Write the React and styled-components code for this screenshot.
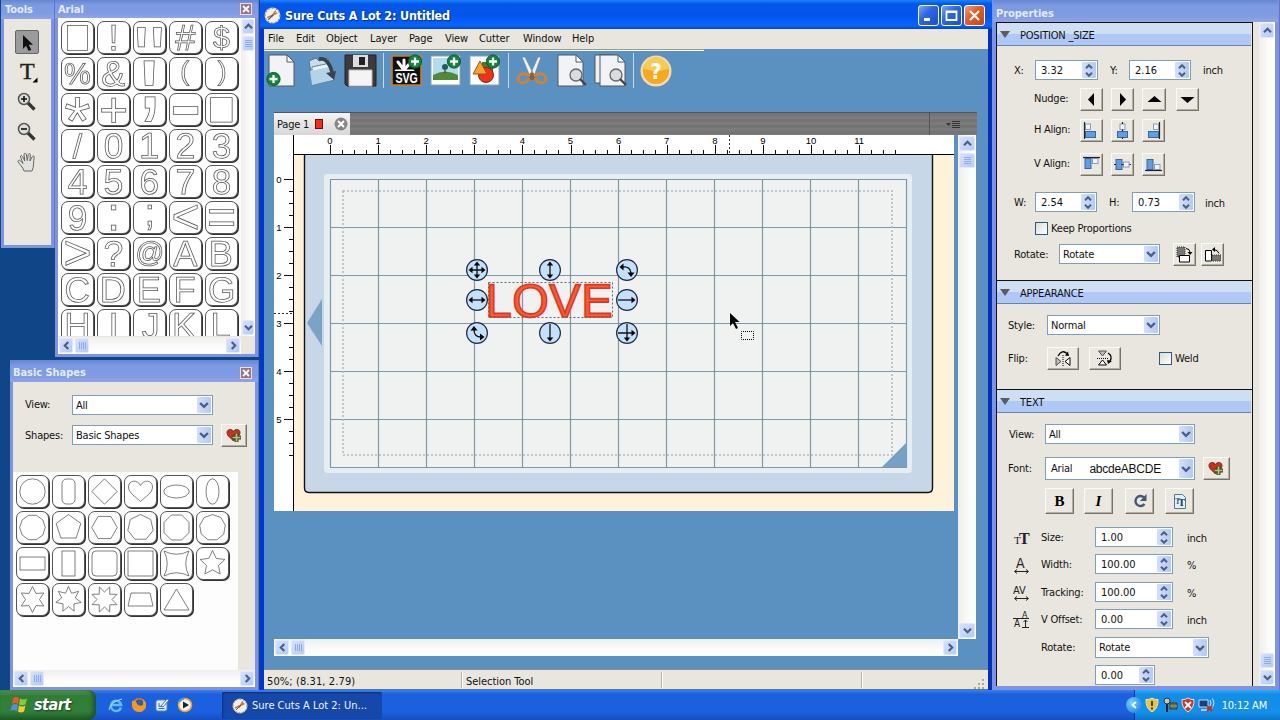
import React, { useMemo } from 'react';
import styled, { createGlobalStyle, css } from 'styled-components';

const colors = {
  desktop: '#104687',
  face: '#e9e6df',
  sky: '#5a91c1',
  border: '#7f9db9',
  chevron: '#4a5f8b',
};

const ui = `'DejaVu Sans Condensed', 'DejaVu Sans', sans-serif`;

const GlobalStyle = createGlobalStyle`
  body {
    margin: 0;
    overflow: hidden;
  }

  * {
    box-sizing: border-box;
  }

  svg {
    display: block;
    flex: none;
  }
`;

const Desktop = styled.div`
  position: relative;
  width: 1280px;
  height: 720px;
  overflow: hidden;
  background: ${colors.desktop};
  font-family: ${ui};
  font-stretch: condensed;
  font-size: 11px;
  letter-spacing: -0.2px;
  color: #111;
  white-space: nowrap;
  cursor: default;
`;

const Frame = styled.section`
  position: absolute;
  left: ${p => p.$x}px;
  top: ${p => p.$y}px;
  width: ${p => p.$w}px;
  height: ${p => p.$h}px;
  display: flex;
  flex-direction: column;
`;

const Palette = styled(Frame)`
  padding: ${p => p.$pad || '0 3px 3px'};
  background: #7e94de;
  border-right: 1px solid #6276c4;
`;

const PaletteTitle = styled.header`
  flex: none;
  display: flex;
  align-items: center;
  justify-content: space-between;
  height: ${p => p.$h}px;
  margin: 0 -3px;
  padding: ${p => p.$pad || '0 4px'};
  background: linear-gradient(#6585d2, #7c9ae2 25%, #809be2 70%, #90a5e4);
  font-weight: bold;
  letter-spacing: -0.05px;
  color: #e2eafc;
`;

const PaletteClose = styled.button`
  display: flex;
  align-items: center;
  justify-content: center;
  width: 12px;
  height: 12px;
  padding: 0;
  border: 1px solid #e9dfe4;
  background: #a0707c;
`;

const Body = styled.div`
  flex: 1;
  min-height: 0;
  display: flex;
  flex-direction: column;
  background: ${colors.face};
`;

const Row = styled.div`
  flex: none;
  display: flex;
  align-items: center;
  height: ${p => p.$h}px;
  margin-top: ${p => p.$mt || 0}px;
  padding-left: ${p => p.$pl || 0}px;
`;

const Label = styled.span`
  flex: none;
  width: ${p => p.$w}px;
  padding: ${p => p.$drop || 0}px 0 ${p => (p.$up ? 2 : 0)}px;
  letter-spacing: ${p => p.$ls || -0.2}px;
`;

const Raised = styled.button`
  flex: none;
  display: flex;
  align-items: center;
  justify-content: center;
  width: ${p => p.$w || 23}px;
  height: ${p => p.$h || 23}px;
  margin: 0 ${p => p.$mr || 0}px 0 0;
  padding: 0;
  border: 1px solid;
  border-color: #fbfaf7 #77736b #77736b #fbfaf7;
  box-shadow: inset -1px -1px 0 #b5b0a6;
  background: #ebe8e1;
  color: #000;
  font: ${p => (p.$italic ? 'italic' : 'normal')} bold 15px 'Liberation Serif', serif;
`;

const Field = styled.div`
  flex: none;
  display: flex;
  align-items: center;
  justify-content: space-between;
  width: ${p => p.$w}px;
  height: ${p => p.$h || 20}px;
  padding: 1px 1px 1px ${p => p.$pl || 3}px;
  margin-right: ${p => p.$mr || 0}px;
  border: 1px solid ${colors.border};
  background: #fff;
`;

const FieldButton = styled.span`
  display: flex;
  flex-direction: column;
  align-items: center;
  justify-content: center;
  gap: 3px;
  width: 14px;
  height: 100%;
  border-radius: 1px;
  background: linear-gradient(90deg, #d3e0fc, #b4c8f4);
`;

const Check = styled.span`
  flex: none;
  width: 13px;
  height: 13px;
  margin-right: 3px;
  border: 1px solid #2f5a80;
  background: linear-gradient(135deg, #dcdcd7, #fff);
`;

const Track = styled.div`
  flex: none;
  display: flex;
  flex-direction: ${p => (p.$vertical ? 'column' : 'row')};
  gap: 2px;
  padding: 1px;
  width: ${p => (p.$vertical ? `${p.$size || 16}px` : 'auto')};
  height: ${p => (p.$vertical ? 'auto' : `${p.$size || 16}px`)};
  background: ${p =>
    p.$vertical
      ? 'linear-gradient(90deg, #efeee9, #fbfbfa 60%, #fff)'
      : 'linear-gradient(#f0efeb, #fbfbfa 60%, #fff)'};
`;

const TrackPart = styled.span`
  flex: none;
  display: flex;
  align-items: center;
  justify-content: center;
  width: ${p => (p.$vertical ? 'auto' : '14px')};
  height: ${p => (p.$vertical ? '15px' : 'auto')};
  ${p => p.$end && (p.$vertical ? 'margin-top: auto;' : 'margin-left: auto;')}
  border: 1px solid #dfe8fd;
  border-radius: 2px;
  background: linear-gradient(135deg, #d5e1fd, #b7caf6);
`;

const Chevron = ({ dir = 'down', size = 9 }) => {
  const turn = { down: 0, up: 180, left: 90, right: -90 }[dir];
  return (
    <svg width={size} height={size} viewBox="0 0 9 9">
      <path
        d="M1 2.7 4.5 6.2 8 2.7"
        transform={`rotate(${turn} 4.5 4.5)`}
        fill="none"
        stroke={colors.chevron}
        strokeWidth="2.2"
      />
    </svg>
  );
};

const MiniChevron = ({ up }) => (
  <svg width="8" height="5" viewBox="0 0 8 5">
    <path d={up ? 'M1 4.2 4 1.2 7 4.2' : 'M1 .8 4 3.8 7 .8'} fill="none" stroke={colors.chevron} strokeWidth="2" />
  </svg>
);

const Grip = ({ vertical }) => (
  <svg width="9" height="9" viewBox="0 0 9 9">
    <path
      d={vertical ? 'M1 1.5H8M1 3.5H8M1 5.5H8M1 7.5H8' : 'M1.5 1V8M3.5 1V8M5.5 1V8M7.5 1V8'}
      stroke="#8fabea"
      strokeWidth="1"
    />
  </svg>
);

const Scrollbar = ({ vertical, size, thumb = 'start' }) => (
  <Track $vertical={vertical} $size={size}>
    <TrackPart $vertical={vertical}>
      <Chevron dir={vertical ? 'up' : 'left'} />
    </TrackPart>
    <TrackPart $vertical={vertical} $end={thumb === 'end'}>
      <Grip vertical={vertical} />
    </TrackPart>
    <TrackPart $vertical={vertical} $end={thumb !== 'end'}>
      <Chevron dir={vertical ? 'down' : 'right'} />
    </TrackPart>
  </Track>
);

const Select = ({ children, w, h, mr }) => (
  <Field $w={w} $h={h} $mr={mr}>
    <span>{children}</span>
    <FieldButton>
      <Chevron size={10} />
    </FieldButton>
  </Field>
);

const Spinner = ({ value, w, mr }) => (
  <Field $w={w} $mr={mr} $pl={5}>
    <Label $ls={0.01}>{value}</Label>
    <FieldButton>
      <MiniChevron up />
      <MiniChevron />
    </FieldButton>
  </Field>
);

/* ---------- tiles ---------- */

const Tiles = styled.div`
  flex: 1;
  min-width: 0;
  display: grid;
  grid-template-columns: repeat(${p => p.$cols}, 36px);
  grid-auto-rows: 36px;
  align-content: start;
  padding: 3px 0 0 3px;
  overflow: hidden;
  background: #fdfdfd;
`;

const Tile = styled.div`
  width: 33px;
  height: 33px;
  border: 1px solid #555;
  border-radius: 7px;
  box-shadow: 1px 1px 0 #333;
  background: #fff;
`;

const Outline = styled.svg.attrs({ width: 31, height: 31, viewBox: '0 0 31 31' })`
  overflow: visible;
  fill: none;
  stroke: #555;
  stroke-width: 0.75;
  letter-spacing: 0;
  font-stretch: normal;
  text-rendering: geometricPrecision;
  will-change: transform;
`;

const GLYPH_FONT = `'Liberation Sans', Arial, sans-serif`;

// scale each glyph so that its ink fills the tile
const fitGlyph = char => {
  const ctx = document.createElement('canvas').getContext('2d');
  ctx.font = `100px ${GLYPH_FONT}`;
  const m = ctx.measureText(char);
  const w = m.actualBoundingBoxLeft + m.actualBoundingBoxRight;
  const h = m.actualBoundingBoxAscent + m.actualBoundingBoxDescent;
  const k = 25 / Math.max(w, h);
  return {
    size: 100 * k,
    x: 15.5 - (w * k) / 2 + m.actualBoundingBoxLeft * k,
    y: 15.5 + (h * k) / 2 - m.actualBoundingBoxDescent * k,
  };
};

const GlyphTile = ({ char }) => {
  const fit = useMemo(() => fitGlyph(char), [char]);
  return (
    <Tile>
      <Outline>
        {char === ' ' ? (
          <rect x="5.5" y="3.5" width="20" height="25" />
        ) : (
          <text x={fit.x} y={fit.y} fontSize={fit.size} fontFamily={GLYPH_FONT}>
            {char}
          </text>
        )}
      </Outline>
    </Tile>
  );
};

const chars = [...' !"#$%&\'()*+,-./0123456789:;<=>?@ABCDEFGHIJKL'];

const ring = (n, r, inner, turn = -90) => {
  const count = inner ? n * 2 : n;
  return Array.from({ length: count }, (_, i) => {
    const a = ((turn + (360 / count) * i) * Math.PI) / 180;
    const radius = inner && i % 2 ? inner : r;
    return `${(15.5 + radius * Math.cos(a)).toFixed(2)},${(15.5 + radius * Math.sin(a)).toFixed(2)}`;
  }).join(' ');
};

const shapes = [
  <circle cx="15.5" cy="15.5" r="12.7" />,
  <rect x="9" y="3" width="13" height="25" rx="4.5" />,
  <polygon points={ring(4, 12.7)} />,
  <path d="M15.5 25.5C11 21 3.5 17 3.5 11 3.5 4 12.5 3 15.5 9.5 18.5 3 27.5 4 27.5 11 27.5 17 20 21 15.5 25.5Z" />,
  <ellipse cx="15.5" cy="15.5" rx="12.7" ry="6.5" />,
  <ellipse cx="15.5" cy="15.5" rx="6.5" ry="12.7" />,
  <polygon points={ring(10, 12.8, 0, 0)} />,
  <polygon points={ring(5, 13)} />,
  <polygon points={ring(6, 12.8, 0, 0)} />,
  <polygon points={ring(7, 13)} />,
  <polygon points={ring(8, 13.5, 0, 22.5)} />,
  <polygon points={ring(9, 13)} />,
  <rect x="3" y="9" width="25" height="13" />,
  <rect x="9" y="3" width="13" height="25" />,
  <rect x="3" y="3" width="25" height="25" rx="4" />,
  <rect x="3" y="3" width="25" height="25" />,
  <path d="M3 3Q15.5 9.5 28 3 21.5 15.5 28 28 15.5 21.5 3 28 9.5 15.5 3 3Z" />,
  <polygon points={ring(5, 13, 6.3)} />,
  <polygon points={ring(6, 13, 7)} />,
  <polygon points={ring(7, 13, 7)} />,
  <polygon points={ring(8, 13.5, 7.5, -67.5)} />,
  <path d="M6 9H25L28 22H3Z" />,
  <path d="M15.5 5 28 26H3Z" />,
];

const HeartPlus = () => (
  <svg width="17" height="15" viewBox="0 0 17 15">
    <path d="M7.5 13C5 10 1 8 1 4.5 1 1 6 .5 7.5 3.5 9 .5 14 1 14 4.5 14 8 10 10 7.5 13Z" fill="#c8321c" stroke="#77281d" />
    <path d="M10.5 5v9M6 9.5h9" stroke="#3f4a1c" strokeWidth="4" />
    <path d="M10.5 5.5v8M6.5 9.5h8" stroke="#b9c184" strokeWidth="1.7" />
  </svg>
);

/* ---------- left palettes ---------- */

const ToolList = styled.div`
  display: flex;
  flex-direction: column;
  align-items: center;
  padding: 11px 2px 0 0;
`;

const Tool = styled.div`
  display: flex;
  align-items: center;
  justify-content: center;
  width: 24px;
  height: 24px;
  margin-bottom: 6px;
  ${p =>
    p.$active &&
    css`
      border: 1px solid #666;
      border-radius: 2px;
      background: #9b9b9b;
    `}
`;

const Zoomer = ({ plus }) => (
  <svg width="22" height="22" viewBox="0 0 22 22">
    <path d="m10.5 10.5 8 8" stroke="#333" strokeWidth="3.2" />
    <circle cx="8" cy="8" r="5.5" fill="#ddd" stroke="#555" strokeWidth="1.5" />
    <path d={plus ? 'M5 8h6M8 5v6' : 'M5 8h6'} stroke="#111" strokeWidth="1.6" />
  </svg>
);

const ToolsPalette = () => (
  <Palette $x={1} $y={0} $w={54} $h={248}>
    <PaletteTitle $h={19}>Tools</PaletteTitle>
    <Body>
      <ToolList>
        <Tool $active>
          <svg width="22" height="22" viewBox="0 0 22 22">
            <path d="M7 4v14l3-3.2 2.7 5.2 2.6-1.3-2.6-5h4.3Z" fill="#111" />
          </svg>
        </Tool>
        <Tool>
          <svg width="24" height="24" viewBox="0 0 24 24">
            <text x="5" y="19" fontSize="24" fontFamily="'Liberation Serif', serif" fill="#222" stroke="#222" strokeWidth=".4">
              T
            </text>
            <path d="M22.5 17.5v5h-5Z" fill="#000" />
          </svg>
        </Tool>
        <Tool>
          <Zoomer plus />
        </Tool>
        <Tool>
          <Zoomer />
        </Tool>
        <Tool>
          <svg width="22" height="22" viewBox="0 0 22 22">
            <path
              d="M8 20C7 16 3 13 2 10.5c0-1.500 1.600-1.800 2.600-.5L7 12.500 4.500 6c-.4-1.600 1.500-2 2.100-.6L8.800 10 8 3.500c0-1.600 2-1.700 2.300-.2l1 6.200.9-6c.4-1.500 2.200-1.200 2.100.3L14 10l2.300-4.500c.8-1.200 2.300-.5 1.900.9C17 11 18.500 15 16 20Z"
              fill="#e2e2e2"
              stroke="#666"
            />
          </svg>
        </Tool>
      </ToolList>
    </Body>
  </Palette>
);

const CloseX = () => (
  <svg width="10" height="10" viewBox="0 0 10 10">
    <path d="m2 2 6 6M8 2 2 8" stroke="#fff" strokeWidth="1.8" />
  </svg>
);

const Split = styled.div`
  flex: ${p => (p.$h ? 'none' : 1)};
  min-height: 0;
  height: ${p => (p.$h ? `${p.$h}px` : 'auto')};
  display: flex;
  margin-right: ${p => p.$mr || 0}px;
`;

const Inset = styled.div`
  flex: none;
  width: ${p => p.$w}px;
`;

const GlyphPalette = () => (
  <Palette $x={55} $y={0} $w={204} $h={357}>
    <PaletteTitle $h={18} $pad="0 6px 0 3px">
      Arial
      <PaletteClose>
        <CloseX />
      </PaletteClose>
    </PaletteTitle>
    <Body>
      <Split $h={318}>
        <Tiles $cols={5}>
          {chars.map(c => (
            <GlyphTile key={c} char={c} />
          ))}
        </Tiles>
        <Scrollbar vertical size={14} />
      </Split>
      <Row $h={18}>
        <Inset $w={183}>
          <Scrollbar size={17} />
        </Inset>
      </Row>
    </Body>
  </Palette>
);

const ShapesPalette = () => (
  <Palette $x={10} $y={360} $w={249} $h={330}>
    <PaletteTitle $h={22} $pad="3px 6px 0 3px">
      Basic Shapes
      <PaletteClose>
        <CloseX />
      </PaletteClose>
    </PaletteTitle>
    <Body>
      <Row $h={20} $mt={13} $pl={12}>
        <Label $w={47} $up>
          View:
        </Label>
        <Select w={141}>All</Select>
      </Row>
      <Row $h={24} $mt={8} $pl={12}>
        <Label $w={47}>Shapes:</Label>
        <Select w={141} mr={8}>
          Basic Shapes
        </Select>
        <Raised $w={26}>
          <HeartPlus />
        </Raised>
      </Row>
      <Row $h={25} />
      <Split $mr={17}>
        <Tiles $cols={6}>
          {shapes.map((shape, i) => (
            <Tile key={i}>
              <Outline>{shape}</Outline>
            </Tile>
          ))}
        </Tiles>
      </Split>
      <Scrollbar size={17} />
    </Body>
  </Palette>
);

/* ---------- main window ---------- */

const Main = styled(Frame)`
  padding: 0 4px 0 4px;
  background: linear-gradient(90deg, #0037d0, #1457e8 50%, #0030bd);
`;

const TitleBar = styled.header`
  flex: none;
  display: flex;
  align-items: center;
  height: 29px;
  margin: 0 -4px;
  padding: 2px 7px 0 4px;
  gap: 4px;
  background: linear-gradient(#1c83fb, #0357e8 14%, #0355ea 55%, #0765ff 88%, #0146c6);
  font: bold 12.5px 'DejaVu Sans Condensed', sans-serif;
  font-stretch: condensed;
  letter-spacing: -0.18px;
  color: #fff;
  text-shadow: 1px 1px 1px #0a2f86;
`;

const Caption = styled.span`
  flex: 1;
`;

const CaptionButton = styled.button`
  display: flex;
  align-items: center;
  justify-content: center;
  width: 21px;
  height: 21px;
  margin-left: -2px;
  padding: 0;
  border: 1px solid #fff;
  border-radius: 3px;
  background: ${p =>
    p.$close ? 'linear-gradient(135deg, #f0a183, #e2602c 40%, #cc4313)' : 'linear-gradient(135deg, #7ea6f5, #2f67e0 40%, #1c4fcd)'};
`;

const MenuBar = styled.nav`
  flex: none;
  display: flex;
  align-items: center;
  height: 20px;
  padding: 0 0 2px 4px;
  background: ${colors.face};
`;

const MenuItem = styled.span`
  width: ${p => p.$w}px;
  letter-spacing: -0.1px;
`;

const Workspace = styled.div`
  flex: 1;
  min-height: 0;
  display: flex;
  flex-direction: column;
  background: ${colors.sky};
`;

const ToolStrip = styled.div`
  flex: none;
  display: flex;
  height: 61px;
  padding: 2px 0 0 2px;
`;

const ToolSlot = styled.div`
  width: ${p => p.$w}px;
`;

const ToolRule = styled.div`
  width: 1px;
  height: 35px;
  background: #c5d9e8;
`;

const MenuRule = styled.div`
  flex: none;
  width: 440px;
  height: 2px;
  background: #fbfbf8;
  border-top: 1px solid #9a9890;
`;

const TabStrip = styled.div`
  flex: none;
  display: flex;
  width: 703px;
  height: 23px;
  margin-left: 10px;
  border-top: 1px solid #555;
  background: repeating-linear-gradient(#747474 0 3px, #7b7b7b 3px 6px);
`;

const Tab = styled.div`
  display: flex;
  align-items: center;
  width: 76px;
  padding: 0 2px 0 3px;
  background: linear-gradient(#f4f4f4, #d7d7d7);
`;

const Swatch = styled.span`
  width: 8px;
  height: 10px;
  margin: 0 auto 0 6px;
  border: 1px solid #53180e;
  background: #fb2a10;
`;

const TabMenu = styled.div`
  display: flex;
  align-items: center;
  width: 48px;
  margin-left: auto;
  padding-left: 16px;
  border-left: 1px solid #555;
`;

const Pane = styled.div`
  flex: none;
  display: grid;
  grid-template-columns: 684px 18px;
  grid-template-rows: 504px 17px;
  height: 534px;
  margin-left: 10px;
`;

const Page = styled.div`
  display: grid;
  grid-template-columns: 20px 660px;
  grid-template-rows: 20px 356px;
  align-content: start;
  background: ${colors.sky};
`;

const RulerText = styled.text`
  font: 9.5px 'Liberation Sans', sans-serif;
  letter-spacing: 0;
  text-anchor: middle;
`;

const StatusBar = styled.footer`
  flex: none;
  display: flex;
  align-items: center;
  height: 21px;
  border-top: 1px solid #8c8c84;
  border-bottom: 1px solid #49799f;
  background: ${colors.face};
`;

const StatusCell = styled.span`
  width: ${p => p.$w}px;
  height: 16px;
  padding: 3px 0 0 ${p => p.$pl || 4}px;
  border-right: 1px solid #b9b5aa;
  box-shadow: 1px 0 0 #fff;
  line-height: 13px;
  letter-spacing: ${p => p.$ls || 0}px;
`;

const Compass = ({ size = 16 }) => (
  <svg width={size} height={size} viewBox="0 0 16 16">
    <circle cx="8" cy="8" r="7" fill="#f3f0ea" stroke="#d9d5cd" />
    <circle cx="8" cy="8" r="7" fill="none" stroke="#777" strokeDasharray="1.2 2.4" />
    <path d="M3 10 12.5 5.5M7 9.5l4-6" stroke="#c8743c" strokeWidth="1.4" />
    <path d="m4 12 5-5" stroke="#555" />
  </svg>
);

const Badge = ({ x, y }) => (
  <g transform={`translate(${x} ${y})`}>
    <circle r="6.6" fill="#17823b" stroke="#0c5b27" />
    <path d="M0-4V4M-4 0H4" stroke="#fff" strokeWidth="2.3" />
  </g>
);

const Sheet = ({ x = 0 }) => (
  <>
    <path d={`M${x + 1} 2H${x + 19}L${x + 26} 9V33H${x + 1}Z`} fill="#f2f3f5" stroke="#4d5964" />
    <path d={`M${x + 19} 2V9H${x + 26}Z`} fill="#fff" stroke="#4d5964" />
  </>
);

const Loupe = ({ x }) => (
  <>
    <circle cx={x} cy="22" r="6" fill="#d9dde0" stroke="#666" strokeWidth="1.3" />
    <path d={`m${x + 4} 26 6 6`} stroke="#444" strokeWidth="2.4" />
  </>
);

const icons = {
  newDoc: (
    <svg width="30" height="36" viewBox="0 0 30 36">
      <g transform="translate(2 0)">
        <Sheet />
      </g>
      <Badge x={7.5} y={26} />
    </svg>
  ),
  open: (
    <svg width="32" height="36" viewBox="0 0 32 36">
      <path d="M3 8 10 5l3 3 9-3 2 22-17 5Z" fill="#c9dce9" stroke="#53738a" />
      <path d="m6 14 18-4 4 17-22 5Z" fill="#e8f2fa" stroke="#628098" />
      <path d="m4 18 19-4 3 13-20 5Z" fill="#b4d3e8" />
      <path d="M13 6q9-2 13 13" fill="none" stroke="#3a4148" strokeWidth="3.5" />
      <path d="m20 20 10-2-2 9Z" fill="#3a4148" />
    </svg>
  ),
  save: (
    <svg width="33" height="36" viewBox="0 0 33 36">
      <path d="M1 2H32V33H3L1 31Z" fill="#3b3b3e" stroke="#222" />
      <path d="M9 2H24V14H9Z" fill="#ddd" />
      <path d="M15 4h6v8h-6Z" fill="#222" />
      <path d="M5 17H28V33H5Z" fill="#f4f4f4" stroke="#bbb" />
    </svg>
  ),
  svg: (
    <svg width="31" height="36" viewBox="0 0 31 36">
      <path d="M1 3H30V32H1Z" fill="#111" stroke="#d07d18" strokeWidth="1.6" />
      <path d="M13 18V7M13 17 7 9M13 17l7-8M13 18H5M13 18h9" stroke="#fff" strokeWidth="3" strokeLinecap="round" />
      <path d="M2 18H29V31H2Z" fill="#111" />
      <text x="4.5" y="30" textLength="22" lengthAdjust="spacingAndGlyphs" fontFamily="'Liberation Sans', sans-serif" fontWeight="bold" fontSize="14" fill="#fff">
        SVG
      </text>
      <Badge x={24} y={8.5} />
    </svg>
  ),
  image: (
    <svg width="31" height="36" viewBox="0 0 31 36">
      <path d="M1 3H30V32H1Z" fill="#fff" stroke="#8ba0ad" />
      <path d="M3 5H28V26H3Z" fill="#b5dcee" />
      <path d="M3 22q12-7 25 0v5H3Z" fill="#4f8b36" />
      <path d="M15 20v-5" stroke="#3c3320" />
      <circle cx="15" cy="14" r="3" fill="#235c5f" />
      <Badge x={24} y={8.5} />
    </svg>
  ),
  shapes: (
    <svg width="31" height="36" viewBox="0 0 31 36">
      <path d="M1 3H30V32H1Z" fill="#fff" stroke="#8ba0ad" />
      <path d="M13 9h11v11H13Z" fill="#5a6e37" />
      <circle cx="17" cy="22" r="7.5" fill="#ee3319" stroke="#8c2416" />
      <path d="m11 8 7 13H4Z" fill="#f9a12c" stroke="#91581a" />
      <Badge x={24} y={8.5} />
    </svg>
  ),
  cut: (
    <svg width="34" height="36" viewBox="0 0 34 36">
      <path d="m7 4 3 0 9 18-3 4ZM26 4l-3 0-8 18 3 4Z" fill="#edf1f4" stroke="#75828c" strokeWidth=".7" />
      <circle cx="17" cy="23.5" r="3.5" fill="#8a6237" />
      <path d="M15 23C8 19 3 21 3 26s8 6 11-1M19 23c7-4 12-2 12 3s-8 6-11-1" fill="none" stroke="#c8853a" strokeWidth="3" />
    </svg>
  ),
  find: (
    <svg width="31" height="36" viewBox="0 0 31 36">
      <Sheet />
      <Loupe x={19} />
    </svg>
  ),
  findAll: (
    <svg width="33" height="36" viewBox="0 0 33 36">
      <path d="M1 2H19V30H1Z" fill="#f0f0f0" stroke="#4d5964" />
      <Sheet x={5} />
      <Loupe x={22} />
    </svg>
  ),
  help: (
    <svg width="32" height="36" viewBox="0 0 32 36">
      <circle cx="16" cy="18" r="14.3" fill="#f6a91e" stroke="#f3ddb0" strokeWidth="2.4" />
      <path d="M4 16a12 12 0 0 1 24 0q-12 4-24 0" fill="#fbc955" />
      <text x="16" y="26" textAnchor="middle" fontFamily="'DejaVu Sans', sans-serif" fontWeight="bold" fontSize="22" fill="#fff">
        ?
      </text>
    </svg>
  ),
};

// [icon, width up to the next one]
const toolStrip = [
  ['newDoc', 40],
  ['open', 38],
  ['save', 39],
  ['rule', 8],
  ['svg', 39],
  ['image', 39],
  ['shapes', 39],
  ['rule', 7],
  ['cut', 42],
  ['find', 37],
  ['findAll', 39],
  ['rule', 7],
  ['help', 32],
];

const INCH = 48.1;

const HorizontalRuler = () => (
  <svg width="660" height="20" viewBox="0 0 660 20">
    <rect width="660" height="20" fill="#fff" />
    <path d="M0 19.5H660" stroke="#000" />
    <path d="M435.5 0V19" stroke="#333" strokeDasharray="2 2" />
    {Array.from({ length: 48 }, (_, i) => {
      const x = Math.round(36 + (i * INCH) / 4) + 0.5;
      return <path key={i} d={`M${x} ${i % 4 ? 15 : 10}V19`} stroke="#111" />;
    })}
    {Array.from({ length: 12 }, (_, i) => (
      <RulerText key={i} x={36 + i * INCH} y="9">
        {i}
      </RulerText>
    ))}
  </svg>
);

const VerticalRuler = () => (
  <svg width="20" height="356" viewBox="0 0 20 356">
    <rect width="20" height="356" fill="#fff" />
    <path d="M19.5 0V356" stroke="#000" />
    <path d="M0 158.5H19" stroke="#333" strokeDasharray="2 2" />
    {Array.from({ length: 24 }, (_, i) => {
      const y = 24.5 + i * 12;
      return <path key={i} d={`M${i % 4 ? 15 : 10} ${y}H19`} stroke="#111" />;
    })}
    {Array.from({ length: 6 }, (_, i) => (
      <RulerText key={i} x="5" y={28 + i * 48}>
        {i}
      </RulerText>
    ))}
  </svg>
);

const heads = {
  n: 'M0-8.5 3.2-4.5H-3.2Z',
  s: 'M0 8.5 3.2 4.5H-3.2Z',
  w: 'M-8.5 0-4.5-3.2V3.2Z',
  e: 'M8.5 0 4.5-3.2V3.2Z',
};

const handles = [
  { x: 183, y: 115, line: 'M-7 0H7M0-7V7', ends: 'nswe' },
  { x: 256, y: 115, line: 'M0-7V7', ends: 'ns' },
  { x: 333, y: 115, line: 'M-4-3Q3-4 4 3', extra: 'M-7.5-3-3.5-6.5V.5ZM4 7 .5 2.5H7.5Z' },
  { x: 183, y: 145, line: 'M-7 0H7', ends: 'we' },
  { x: 333, y: 145, line: 'M-9 0H7', ends: 'e' },
  { x: 183, y: 178, line: 'M-3-3Q-3 4 4 4', extra: 'M-3-7-6.5-2.5H.5ZM7.5 4 3 .5V7.5Z' },
  { x: 256, y: 178, line: 'M0-9V7', ends: 's' },
  { x: 333, y: 178, line: 'M-9 0H7M0-9V7', ends: 'se' },
];

const Lettering = styled.text`
  font-family: ${GLYPH_FONT};
  font-size: 47px;
  font-stretch: normal;
  letter-spacing: 0;
  text-rendering: geometricPrecision;
  fill: #fb5a36;
  stroke: #dc3a20;
  stroke-width: 1.6;
`;

const Canvas = () => (
  <svg width="660" height="356" viewBox="0 0 660 356">
    <rect width="660" height="356" fill="#fef3da" />
    <path d="M10.5 0V333Q10.5 337.5 15 337.5H634Q638.5 337.5 638.5 333V0" fill="#c8d7e7" stroke="#111" strokeWidth="1.4" />
    <rect x="30" y="19" width="588" height="299" rx="4" fill="#e6eef4" />
    <rect x="36" y="24" width="577" height="288" fill="#f0f1f1" />
    <path d="M28 144V191L13 168Z" fill="#7ba3c6" />
    <g stroke="#7f98a5" strokeWidth="1.2">
      {Array.from({ length: 13 }, (_, i) => (
        <path key={i} d={`M${36.5 + i * 48} 24V312`} />
      ))}
      {Array.from({ length: 7 }, (_, i) => (
        <path key={i} d={`M36 ${24.5 + i * 48}H613`} />
      ))}
    </g>
    <rect x="49" y="36" width="549" height="264" fill="none" stroke="#b2bac2" strokeWidth="1.6" strokeDasharray="2 2" />
    <path d="M588 312 613 287V312Z" fill="#76a0c4" />
    <Lettering x="191.5" y="162" textLength="127">
      LOVE
    </Lettering>
    <rect x="194.5" y="127.5" width="124" height="35" fill="none" stroke="#666" strokeDasharray="2 2" />
    {handles.map(({ x, y, line, ends = '', extra }) => (
      <g key={`${x}-${y}`} transform={`translate(${x} ${y})`}>
        <circle r="10.4" fill="#c4e0fb" stroke="#1c2b45" strokeWidth="1.2" />
        <path d={line} fill="none" stroke="#111" strokeWidth="1.3" />
        <path d={[...ends].map(e => heads[e]).join('') + (extra || '')} fill="#000" />
      </g>
    ))}
    <path d="M436 158v13l3-3 3 6 2-1-3-6h4.5Z" fill="#000" />
    <rect x="447.5" y="176.5" width="12" height="8" fill="none" stroke="#000" strokeDasharray="1 1" strokeDashoffset="0.5" />
  </svg>
);

const menu = [
  ['File', 28],
  ['Edit', 30],
  ['Object', 44],
  ['Layer', 39],
  ['Page', 36],
  ['View', 34],
  ['Cutter', 44],
  ['Window', 49],
  ['Help', 40],
];

const MainWindow = () => (
  <Main $x={260} $y={0} $w={732} $h={690}>
    <TitleBar>
      <Compass size={17} />
      <Caption>Sure Cuts A Lot 2: Untitled</Caption>
      <CaptionButton>
        <svg width="17" height="17" viewBox="0 0 17 17">
          <path d="M4 12.5h6" stroke="#fff" strokeWidth="3" />
        </svg>
      </CaptionButton>
      <CaptionButton>
        <svg width="17" height="17" viewBox="0 0 17 17">
          <path d="M3.5 4.5h10v8.5h-10ZM3 5h11" fill="none" stroke="#fff" strokeWidth="1.8" />
        </svg>
      </CaptionButton>
      <CaptionButton $close>
        <svg width="17" height="17" viewBox="0 0 17 17">
          <path d="m4 4 9 9M13 4l-9 9" stroke="#fff" strokeWidth="2.2" />
        </svg>
      </CaptionButton>
    </TitleBar>
    <MenuBar>
      {menu.map(([name, w]) => (
        <MenuItem key={name} $w={w}>
          {name}
        </MenuItem>
      ))}
    </MenuBar>
    <Workspace>
      <MenuRule />
      <ToolStrip>
        {toolStrip.map(([name, w], i) => (
          <ToolSlot key={i} $w={w}>
            {name === 'rule' ? <ToolRule /> : icons[name]}
          </ToolSlot>
        ))}
      </ToolStrip>
      <TabStrip>
        <Tab>
          Page 1
          <Swatch />
          <svg width="14" height="14" viewBox="0 0 14 14">
            <circle cx="7" cy="7" r="6.5" fill="#858585" />
            <path d="m4 4 6 6M10 4l-6 6" stroke="#fff" strokeWidth="2" />
          </svg>
        </Tab>
        <TabMenu>
          <svg width="15" height="9" viewBox="0 0 15 9">
            <path d="M0 3h5L2.5 6Z" fill="#333" />
            <path d="M6 1.5h8M6 3.5h8M6 5.5h8M6 7.5h8" stroke="#333" />
          </svg>
        </TabMenu>
      </TabStrip>
      <Pane>
        <Page>
          <svg width="20" height="20">
            <rect width="20" height="20" fill="#fff" />
            <path d="M19.5 0V20" stroke="#000" />
          </svg>
          <HorizontalRuler />
          <VerticalRuler />
          <Canvas />
        </Page>
        <Scrollbar vertical size={18} />
        <Scrollbar size={17} />
      </Pane>
    </Workspace>
    <StatusBar>
      <StatusCell $w={198} $pl={3} $ls={0.1}>
        50%; (8.31, 2.79)
      </StatusCell>
      <StatusCell $w={200} $ls={-0.05}>
        Selection Tool
      </StatusCell>
      <StatusCell $w={200} />
      <svg width="124" height="18" viewBox="0 0 124 18">
        <path d="M121 8v2M121 12v2M117 12v2M121 16v2M117 16v2M113 16v2" stroke="#aaa69b" strokeWidth="2" />
      </svg>
    </StatusBar>
  </Main>
);

/* ---------- properties ---------- */

const Sections = styled.div`
  display: flex;
  flex-direction: column;
  width: 257px;
  border: solid #111;
  border-width: 0 1px;
`;

const Section = styled.section`
  flex: none;
  height: ${p => p.$h}px;
  border-top: 1px solid #111;
`;

const SectionTitle = styled.h3`
  display: flex;
  align-items: center;
  gap: 10px;
  height: 23px;
  margin: 0 1px 0 0;
  padding: 2px 0 0 3px;
  border-bottom: 1px solid #6c83a9;
  background: linear-gradient(#cfdff3 0 50%, #b0c8f6 50%);
  font-size: 11px;
  font-weight: normal;
`;

const SectionBox = ({ title, h, children }) => (
  <Section $h={h}>
    <SectionTitle>
      <svg width="10" height="10" viewBox="0 0 10 10">
        <path d="M0 1h10L5 8Z" fill="#5c5c5c" />
      </svg>
      {title}
    </SectionTitle>
    {children}
  </Section>
);

const Arrow = ({ d }) => (
  <svg width="15" height="15" viewBox="0 0 15 15">
    <path d={d} fill="#000" />
  </svg>
);

const Align = ({ kind, vertical }) => {
  const base = { start: 1.5, middle: 8.5, end: 14.5 }[kind];
  const small = { start: 2.5, middle: 6, end: 8.5 }[kind];
  const big = { start: 2.5, middle: 3.5, end: 3.5 }[kind];
  return (
    <svg width="17" height="17" viewBox="0 0 17 17">
      <g transform={vertical ? 'matrix(0 1 1 0 0 0)' : undefined}>
        <rect x={small} y={vertical ? 9.5 : 2} width="5" height="5.5" fill="#eef4fb" stroke="#8b9cb5" />
        <rect x={big} y={vertical ? 2 : 9.5} width="10" height="6" fill="#5f9de4" stroke="#3d6799" />
        <path d={kind === 'middle' ? 'M8.5 0V2M8.5 7.5V9.5M8.5 15.5V17' : `M${base} 0V17`} stroke="#222" strokeWidth="1.2" />
      </g>
    </svg>
  );
};

const PositionSection = () => (
  <SectionBox title="POSITION _SIZE" h={258}>
    <Row $h={20} $mt={14} $pl={17}>
      <Label $w={21}>X:</Label>
      <Spinner value="3.32" w={63} mr={12} />
      <Label $w={19}>Y:</Label>
      <Spinner value="2.16" w={62} mr={12} />
      <Label>inch</Label>
    </Row>
    <Row $h={23} $mt={8} $pl={37}>
      <Label $w={46} $up>
        Nudge:
      </Label>
      <Raised $mr={8}>
        <Arrow d="M4 7.5 10 1V14Z" />
      </Raised>
      <Raised $mr={8}>
        <Arrow d="M11 7.5 5 1V14Z" />
      </Raised>
      <Raised $mr={10} $w={24}>
        <Arrow d="M7.5 4 14.5 10H.5Z" />
      </Raised>
      <Raised>
        <Arrow d="M7.5 11 14.5 5H.5Z" />
      </Raised>
    </Row>
    <Row $h={23} $mt={8} $pl={37}>
      <Label $w={46} $ls={-0.3} $up>
        H Align:
      </Label>
      <Raised $mr={8}>
        <Align kind="start" />
      </Raised>
      <Raised $mr={8}>
        <Align kind="middle" />
      </Raised>
      <Raised>
        <Align kind="end" />
      </Raised>
    </Row>
    <Row $h={23} $mt={11} $pl={37}>
      <Label $w={46} $ls={-0.3} $up>
        V Align:
      </Label>
      <Raised $mr={8}>
        <Align kind="start" vertical />
      </Raised>
      <Raised $mr={8}>
        <Align kind="middle" vertical />
      </Raised>
      <Raised>
        <Align kind="end" vertical />
      </Raised>
    </Row>
    <Row $h={20} $mt={16} $pl={17}>
      <Label $w={21}>W:</Label>
      <Spinner value="2.54" w={62} mr={12} />
      <Label $w={23}>H:</Label>
      <Spinner value="0.73" w={63} mr={10} />
      <Label $drop={3}>inch</Label>
    </Row>
    <Row $h={14} $mt={9} $pl={38}>
      <Check />
      <Label $ls={-0.2}>Keep Proportions</Label>
    </Row>
    <Row $h={24} $mt={7} $pl={17}>
      <Label $w={45}>Rotate:</Label>
      <Select w={101} mr={13}>
        Rotate
      </Select>
      <Raised $mr={5}>
        <svg width="17" height="17" viewBox="0 0 17 17">
          <path d="M1 1h8v10H1Z" fill="#777" stroke="#333" strokeDasharray="1 1" />
          <path d="M3.5 9.5h10V16h-10Z" fill="#fff" stroke="#000" />
          <path d="M10 2.5q4 0 4 4" fill="none" stroke="#000" />
          <path d="m11.5 6h5L14 9Z" />
        </svg>
      </Raised>
      <Raised>
        <svg width="17" height="17" viewBox="0 0 17 17">
          <path d="M1.5 4.5h6V15h-6Z" fill="#fff" stroke="#000" />
          <path d="M8 9h9v6H8Z" fill="#777" stroke="#333" strokeDasharray="1 1" />
          <path d="M9 3.5q5 0 6 4" fill="none" stroke="#000" />
          <path d="M11 1v5L8 3.5Z" />
        </svg>
      </Raised>
    </Row>
  </SectionBox>
);

const AppearanceSection = () => (
  <SectionBox title="APPEARANCE" h={109}>
    <Row $h={20} $mt={11} $pl={11}>
      <Label $w={39}>Style:</Label>
      <Select w={113}>Normal</Select>
    </Row>
    <Row $h={24} $mt={11} $pl={11}>
      <Label $w={39}>Flip:</Label>
      <Raised $w={32} $mr={10}>
        <svg width="18" height="17" viewBox="0 0 18 17">
          <path d="M2 7.5v8l5-4Z" fill="#bbb" stroke="#555" />
          <path d="M16 7.5v8l-5-4Z" fill="#fff" stroke="#000" />
          <path d="M9 5v11" stroke="#000" strokeDasharray="1 1" />
          <path d="M4 6Q8-1 13 3.5" fill="none" stroke="#000" strokeWidth="1.3" />
          <path d="M11 5.5 15 6 14 1.5Z" />
        </svg>
      </Raised>
      <Raised $w={32} $mr={38}>
        <svg width="18" height="17" viewBox="0 0 18 17">
          <path d="M2.5 1h8l-4 5Z" fill="#bbb" stroke="#555" />
          <path d="M2.5 15h8l-4-5Z" fill="#fff" stroke="#000" />
          <path d="M1 8.5h11" stroke="#000" strokeDasharray="1 1" />
          <path d="M12 3q5 3 2 8" fill="none" stroke="#000" strokeWidth="1.3" />
          <path d="m11 10 5 1-4 3Z" />
        </svg>
      </Raised>
      <Check />
      Weld
    </Row>
  </SectionBox>
);

const FontSample = styled.span`
  display: flex;
  gap: 17px;
  padding-left: 2px;
`;

const Sample = styled.span`
  font-family: 'Liberation Sans', sans-serif;
  font-size: 12px;
  letter-spacing: -0.25px;
`;

const MetricIcon = styled.svg.attrs({ width: 18, height: 18, viewBox: '0 0 18 18' })`
  margin: 2px 10px 0 0;
  fill: none;
  stroke: #222;
  letter-spacing: 0;

  text {
    fill: #222;
    stroke: none;
  }
`;

const metrics = [
  {
    label: 'Size:',
    value: '1.00',
    unit: 'inch',
    mt: 13,
    icon: (
      <>
        <text x="6" y="15" fontSize="16" fontFamily="'Liberation Serif', serif" fontWeight="bold">
          T
        </text>
        <text x="1" y="15" fontSize="11" fontFamily="'Liberation Serif', serif">
          T
        </text>
      </>
    ),
  },
  {
    label: 'Width:',
    value: '100.00',
    unit: '%',
    mt: 7,
    icon: (
      <>
        <text x="3" y="12" fontSize="14" fontFamily={ui}>
          A
        </text>
        <path d="M2 15.5H15M4 13.5l-2.5 2L4 17.5M13 13.5l2.5 2-2.5 2" />
      </>
    ),
  },
  {
    label: 'Tracking:',
    value: '100.00',
    unit: '%',
    mt: 8,
    icon: (
      <>
        <text x="0" y="10" fontSize="11" fontFamily={ui}>
          AV
        </text>
        <path d="M2 14.5H15M4 12.5l-2.5 2 2.5 2M13 12.5l2.5 2-2.5 2" />
      </>
    ),
  },
  {
    label: 'V Offset:',
    value: '0.00',
    unit: 'inch',
    mt: 7,
    icon: (
      <>
        <text x="1" y="16" fontSize="10" fontFamily={ui}>
          A
        </text>
        <text x="9" y="7" fontSize="9" fontFamily={ui}>
          A
        </text>
        <path d="M0 7.5h16M12.5 9v7M10.5 11l2-2 2 2M9 16.5h7" />
      </>
    ),
  },
];

const TextSection = () => (
  <SectionBox title="TEXT" h={297}>
    <Row $h={20} $mt={11} $pl={12}>
      <Label $w={36}>View:</Label>
      <Select w={150}>All</Select>
    </Row>
    <Row $h={23} $mt={13} $pl={11}>
      <Label $w={37}>Font:</Label>
      <Select w={150} h={23} mr={8}>
        <FontSample>
          Arial <Sample>abcdeABCDE</Sample>
        </FontSample>
      </Select>
      <Raised $w={27}>
        <HeartPlus />
      </Raised>
    </Row>
    <Row $h={26} $mt={8} $pl={48}>
      <Raised $w={29} $h={26} $mr={10}>
        B
      </Raised>
      <Raised $w={29} $h={26} $mr={12} $italic>
        I
      </Raised>
      <Raised $w={29} $h={26} $mr={11}>
        <svg width="16" height="16" viewBox="0 0 16 16">
          <path d="M12 4.5A5 5 0 1 0 12.5 11" fill="none" stroke="#4a5677" strokeWidth="2.4" />
          <path d="M14.5 1v7H8Z" fill="#4a5677" />
        </svg>
      </Raised>
      <Raised $w={29} $h={26}>
        <svg width="14" height="17" viewBox="0 0 14 17">
          <path d="M1.5 1.5h8l3 3v11h-11Z" fill="#e3f0fa" stroke="#587791" />
          <text x="5" y="13" fontSize="11" fontWeight="bold" fontFamily="'Liberation Serif', serif" fill="#173e66">
            T
          </text>
          <text x="2" y="11" fontSize="8" fontWeight="bold" fontFamily="'Liberation Serif', serif" fill="#3c6c98">
            T
          </text>
        </svg>
      </Raised>
    </Row>
    {metrics.map(m => (
      <Row key={m.label} $h={20} $mt={m.mt} $pl={16}>
        <MetricIcon>{m.icon}</MetricIcon>
        <Label $w={54}>{m.label}</Label>
        <Spinner value={m.value} w={78} mr={14} />
        <Label $drop={3}>{m.unit}</Label>
      </Row>
    ))}
    <Row $h={21} $mt={8} $pl={44}>
      <Label $w={54}>Rotate:</Label>
      <Select w={114} h={21}>
        Rotate
      </Select>
    </Row>
    <Row $h={20} $mt={7} $pl={98}>
      <Spinner value="0.00" w={60} />
    </Row>
  </SectionBox>
);

const ScrollColumn = styled.div`
  display: flex;
  margin-left: auto;
`;

const PropertiesPanel = () => (
  <Palette $x={992} $y={0} $w={288} $h={690} $pad="0 4px 4px">
    <PaletteTitle $h={22} $pad="4px 4px 0 3px">
      Properties
    </PaletteTitle>
    <Body>
      <Split>
        <Sections>
          <PositionSection />
          <AppearanceSection />
          <TextSection />
        </Sections>
        <ScrollColumn>
          <Scrollbar vertical size={16} thumb="end" />
        </ScrollColumn>
      </Split>
    </Body>
  </Palette>
);

/* ---------- taskbar ---------- */

const Taskbar = styled(Frame)`
  flex-direction: row;
  align-items: stretch;
  background: linear-gradient(#3e80ee, #1b5fdc 15%, #1b62e0 70%, #164fbe);
`;

const Start = styled.button`
  display: flex;
  align-items: center;
  gap: 5px;
  width: 96px;
  padding: 0 0 1px 10px;
  border: 0;
  border-radius: 0 8px 8px 0;
  background: linear-gradient(#55975a, #317d35 20%, #31803a 70%, #205f26);
  box-shadow: inset -3px -1px 4px #1d5422;
  font: italic bold 16px 'DejaVu Sans Condensed', 'Open Sans', sans-serif;
  font-stretch: condensed;
  letter-spacing: -0.5px;
  color: #fff;
  text-shadow: 1px 1px 2px #173f1a;
`;

const QuickLaunch = styled.div`
  display: flex;
  align-items: center;
  gap: 7px;
  width: 126px;
  padding-left: 12px;
`;

const TaskButton = styled.div`
  display: flex;
  align-items: center;
  gap: 4px;
  width: 160px;
  margin: 2px 0 1px;
  padding-left: 10px;
  border-radius: 2px;
  background: #1548a9;
  box-shadow: inset 1px 1px 2px #0c317b;
  letter-spacing: 0;
  color: #eef4ff;
`;

const Tray = styled.div`
  display: flex;
  align-items: center;
  gap: 2px;
  width: 146px;
  margin-left: auto;
  padding-right: 13px;
  border-left: 1px solid #0c3d9c;
  background: linear-gradient(#30a8f2, #128de8 15%, #1290ea 75%, #0c74c8);
  color: #fff;
`;

const TrayToggle = styled.span`
  display: flex;
  align-items: center;
  justify-content: center;
  width: 16px;
  height: 16px;
  margin-left: -9px;
  border-radius: 50%;
  background: radial-gradient(circle at 35% 35%, #7ad0ff, #0b74d8);
`;

const Clock = styled.span`
  margin-left: auto;
  letter-spacing: -0.2px;
`;

const Shield = ({ fill, children }) => (
  <svg width="16" height="16" viewBox="0 0 16 16">
    <path d="M8 1q3 2 6 1.5Q14.5 11 8 15 1.5 11 2 2.5 5 3 8 1Z" fill={fill} stroke="#e8e3ca" />
    {children}
  </svg>
);

const StartTaskbar = () => (
  <Taskbar $x={0} $y={690} $w={1280} $h={30}>
    <Start>
      <svg width="19" height="19" viewBox="0 0 19 19">
        <path d="M3 3q3-2 6 0L8 9Q5 7 2 9Z" fill="#e6582c" />
        <path d="M10 3.5q3 2 7 0l-1.5 6Q12 11 9 9.5Z" fill="#8cc63f" />
        <path d="M2 10q3-2 6 0l-1 6q-3-2-6.5 0Z" fill="#4e8fe6" />
        <path d="M9 10.5q3 2 6.5 0l-1.5 6q-3 2-6 0Z" fill="#fac92d" />
      </svg>
      start
    </Start>
    <QuickLaunch>
      <svg width="16" height="16" viewBox="0 0 16 16">
        <path d="M13 10.5A5.2 5.2 0 1 1 13.2 8H4" fill="none" stroke="#64b9f5" strokeWidth="2.4" />
        <path d="M1 13Q2 5 14 2" fill="none" stroke="#a9d7f5" />
      </svg>
      <svg width="16" height="16" viewBox="0 0 16 16">
        <circle cx="8" cy="8" r="7" fill="#e8741c" />
        <circle cx="8.5" cy="6.5" r="4" fill="#315da5" />
        <path d="M1 4q4-1 5 3 2 3 6 1 1-3-1-6 5 2 4 8-2 5-7 5-8 0-7-11Z" fill="#f39a24" />
      </svg>
      <svg width="16" height="16" viewBox="0 0 16 16">
        <rect x="2" y="3" width="11" height="11" rx="2" fill="#d8ecfa" stroke="#5b89ab" />
        <path d="M4.5 11.5h6M5 6v3.5h4" fill="none" stroke="#3473a0" />
        <path d="m7 9 6-7 2 1-6 7Z" fill="#fff" stroke="#47739b" />
      </svg>
      <svg width="16" height="16" viewBox="0 0 16 16">
        <circle cx="8" cy="8" r="6.5" fill="#f4f5ee" stroke="#f0a033" strokeWidth="1.6" />
        <path d="M2 5a6.5 6.5 0 0 1 5-3.5" fill="none" stroke="#4e9be6" strokeWidth="2" />
        <path d="m6 4.5 6 3.5-6 3.5Z" fill="#222" />
      </svg>
    </QuickLaunch>
    <TaskButton>
      <Compass />
      Sure Cuts A Lot 2: Un...
    </TaskButton>
    <Tray>
      <TrayToggle>
        <svg width="8" height="8" viewBox="0 0 8 8">
          <path d="M6 1 2.5 4 6 7" fill="none" stroke="#fff" strokeWidth="1.8" />
        </svg>
      </TrayToggle>
      <Shield fill="#f3c32c">
        <path d="M8 4v5M8 10.5v2" stroke="#222" strokeWidth="1.6" />
      </Shield>
      <svg width="16" height="16" viewBox="0 0 16 16">
        <circle cx="5" cy="4" r="3" fill="#c8c9b5" stroke="#333" />
        <path d="M5 7v8" stroke="#222" strokeWidth="2" />
        <path d="M8 6h7v6H8Z" fill="#607049" stroke="#353e2c" />
        <path d="M8 9h7" stroke="#c59a43" />
      </svg>
      <Shield fill="#d4311f">
        <path d="m5 5 6 6M11 5l-6 6" stroke="#fff" strokeWidth="1.8" />
      </Shield>
      <svg width="17" height="16" viewBox="0 0 17 16">
        <path d="M1 3h9v7H1Z" fill="#1b3f7e" stroke="#ccd8e5" />
        <path d="M3 13h6" stroke="#b9c4d2" strokeWidth="2" />
        <path d="M12 3q2 3 0 6M14.5 1.5q3 4.5 0 9" fill="none" stroke="#cfe6fa" />
        <path d="m9 9 5 5M14 9l-5 5" stroke="#d12b21" strokeWidth="1.8" />
      </svg>
      <Clock>10:12 AM</Clock>
    </Tray>
  </Taskbar>
);

const App = () => (
  <Desktop>
    <GlobalStyle />
    <ToolsPalette />
    <GlyphPalette />
    <ShapesPalette />
    <MainWindow />
    <PropertiesPanel />
    <StartTaskbar />
  </Desktop>
);

export default App;
